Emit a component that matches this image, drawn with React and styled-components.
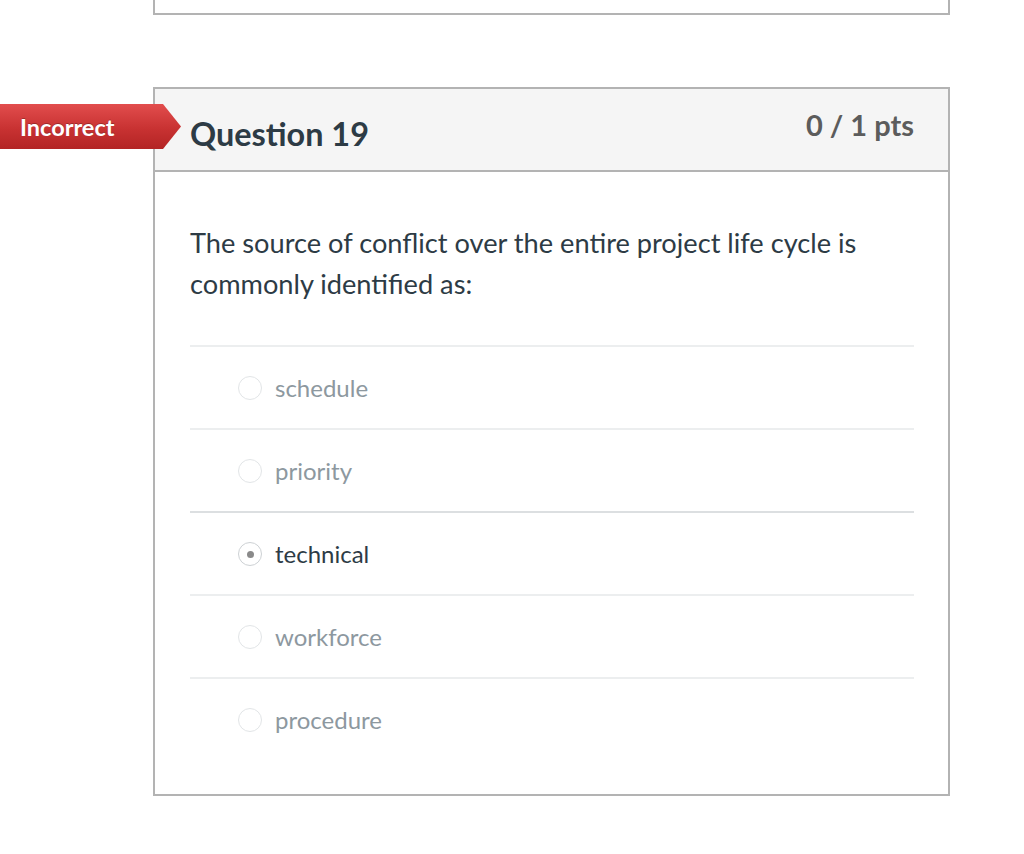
import React from 'react';
import styled, { createGlobalStyle } from 'styled-components';

const GlobalStyle = createGlobalStyle`
  * { box-sizing: border-box; }
  body {
    margin: 0;
    background: #ffffff;
    font-family: Lato, "Open Sans", "Liberation Sans", sans-serif;
    color: #2d3b45;
  }
`;

const Page = styled.div`
  padding-left: 153px;
  width: 950px;
`;

const PrevCard = styled.div`
  height: 15px;
  border: 2px solid #b3b3b3;
  border-top: none;
`;

const CardWrap = styled.div`
  position: relative;
  margin-top: 72px;
`;

const Badge = styled.div`
  position: absolute;
  left: -153px;
  top: 17px;
  height: 45px;
  width: 181px;
  display: flex;
  align-items: center;
  padding-left: 20px;
  color: #ffffff;
  font-size: 23.5px;
  font-weight: 700;
  background: linear-gradient(to bottom, #e24d4d 0%, #c83232 55%, #b32424 100%);
  clip-path: polygon(0 0, 163px 0, 181px 50%, 163px 100%, 0 100%);
  text-shadow: 0 -1px 0 rgba(0, 0, 0, 0.25);
  z-index: 2;
`;

const Card = styled.div`
  border: 2px solid #b3b3b3;
  background: #ffffff;
`;

const Header = styled.div`
  height: 83px;
  background: #f5f5f5;
  border-bottom: 2px solid #b3b3b3;
  display: flex;
  justify-content: space-between;
  align-items: flex-start;
  padding: 19px 34px 0 35px;
`;

const Title = styled.h2`
  margin: 7px 0 0;
  font-size: 32.4px;
  line-height: 1.2;
  font-weight: 700;
  color: #2d3b45;
`;

const Points = styled.div`
  font-size: 29px;
  line-height: 1.2;
  font-weight: 700;
  color: #5c5c5c;
`;

const Body = styled.div`
  padding: 50px 34px 34px 35px;
`;

const Prompt = styled.p`
  margin: 0 0 41px;
  font-size: 27.2px;
  line-height: 41px;
  color: #2d3b45;
`;

const Answer = styled.div`
  height: 83px;
  border-top: 2px solid ${(p) => (p.$strong ? '#dcdfe1' : '#eceeef')};
  display: flex;
  align-items: center;
  padding-left: 48px;
  gap: 13px;
  font-size: 24px;
  color: ${(p) => (p.$selected ? '#2d3b45' : '#8d989f')};
`;

const Radio = styled.span`
  width: 24px;
  height: 24px;
  border-radius: 50%;
  border: 1px solid ${(p) => (p.$selected ? '#cdd1d4' : '#e2e5e7')};
  background: #ffffff;
  display: flex;
  align-items: center;
  justify-content: center;
  flex-shrink: 0;
  margin-top: 1px;

  &::after {
    content: '';
    display: ${(p) => (p.$selected ? 'block' : 'none')};
    width: 7px;
    height: 7px;
    border-radius: 50%;
    background: #8a8a8a;
  }
`;

const answers = [
  { text: 'schedule' },
  { text: 'priority' },
  { text: 'technical', selected: true },
  { text: 'workforce' },
  { text: 'procedure' },
];

export default function App() {
  return (
    <>
      <GlobalStyle />
      <Page>
        <PrevCard />
        <CardWrap>
          <Badge>Incorrect</Badge>
          <Card>
            <Header>
              <Title>Question 19</Title>
              <Points>0 / 1 pts</Points>
            </Header>
            <Body>
              <Prompt>
                The source of conflict over the entire project life cycle is
                commonly identified as:
              </Prompt>
              {answers.map((a, i) => (
                <Answer key={a.text} $selected={a.selected} $strong={i === 2}>
                  <Radio $selected={a.selected} />
                  {a.text}
                </Answer>
              ))}
            </Body>
          </Card>
        </CardWrap>
      </Page>
    </>
  );
}
